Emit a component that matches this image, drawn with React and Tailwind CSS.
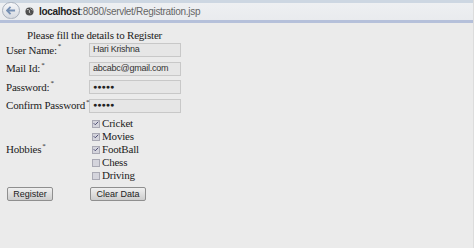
import { Check } from 'lucide-react';

const fields = [
  { label: 'User Name:', value: 'Hari Krishna' },
  { label: 'Mail Id:', value: 'abcabc@gmail.com' },
  { label: 'Password:', value: '●●●●●', dots: true },
  { label: 'Confirm Password', value: '●●●●●', dots: true },
];

const hobbies = [
  { name: 'Cricket', checked: true },
  { name: 'Movies', checked: true },
  { name: 'FootBall', checked: true },
  { name: 'Chess', checked: false },
  { name: 'Driving', checked: false },
];

function Box({ checked }) {
  return (
    <span className="w-[8px] h-[8px] border border-[#a9a9b4] bg-[#d4d4dc] flex items-center justify-center">
      {checked && <Check size={7} strokeWidth={3.5} className="text-[#3e3e66]" />}
    </span>
  );
}

function Star() {
  return <sup className="text-[7px] -top-[4px] relative ml-[1px]">*</sup>;
}

export default function App() {
  return (
    <div className="w-[474px] h-[248px] bg-[#ebebeb] overflow-hidden flex flex-col font-['Liberation_Serif',serif] text-[11px] tracking-[-0.2px] text-[#222] border-r border-[#dcdcdc]">
      {/* address bar */}
      <div className="h-[23px] bg-[#c9d3df] flex flex-col border-b-[3px] border-[#b5c0da]">
        <div className="h-[3px] bg-[#cdd7e2]" />
        <div className="flex-1 bg-gradient-to-b from-[#eef0f2] to-[#e9ebee] flex items-center pl-[2px] gap-[5px] tracking-normal">
          <span className="w-[18px] h-[17px] -mt-[2px] rounded-full border border-[#a8b0bc] bg-gradient-to-b from-[#f6f7f9] to-[#d6dae1] flex items-center justify-center">
            <svg width="10" height="9" viewBox="0 0 11 10">
              <path d="M5 1 L1 5 L5 9 M1 5 H10" stroke="#7690b4" strokeWidth="2" fill="none" />
            </svg>
          </span>
          <svg width="9" height="9" viewBox="0 0 10 10">
            <circle cx="5" cy="5" r="4.5" fill="#4f4f4f" />
            <path d="M2 3 Q4 2 5 4 Q4 6 6 7 M6 1.5 Q7 3 8.5 3.5" stroke="#d8d8d8" strokeWidth="1" fill="none" />
          </svg>
          <span className="font-['Liberation_Sans',sans-serif] text-[10px] tracking-[-0.3px] leading-none">
            <span className="font-bold text-[#222]">localhost</span>
            <span className="text-[#666]">:8080/servlet/Registration.jsp</span>
          </span>
        </div>
      </div>

      <div className="pl-[6px] pt-[5px]">
        <div className="pl-[21px] leading-[15px] h-[15px]">Please fill the details to Register</div>
        <div className="grid grid-cols-[83px_auto] w-fit gap-y-[4.5px]">
          {fields.map((f) => (
            <div key={f.label} className="contents">
              <div className="flex items-center h-[14px] whitespace-nowrap">
                {f.label}
                <Star />
              </div>
              <div className="h-[14px] w-[92px] border border-[#c8c8c8] bg-[#e6e6e6] flex items-center px-[3px] font-['Liberation_Sans',sans-serif] text-[9px] tracking-[-0.25px] text-[#333]">
                {f.dots ? <span className="text-[7px] tracking-[0px] text-[#222]">{f.value}</span> : f.value}
              </div>
            </div>
          ))}
          <div className="flex items-center whitespace-nowrap">
            Hobbies
            <Star />
          </div>
          <div className="pl-[3px] flex flex-col">
            {hobbies.map((h) => (
              <label key={h.name} className="flex items-center gap-[2px] h-[13px]">
                <Box checked={h.checked} />
                {h.name}
              </label>
            ))}
          </div>
          <div className="-mt-[2px] pl-[1px]">
            <button className="h-[14px] w-[46px] border border-[#8f8f8f] rounded-[2px] bg-gradient-to-b from-[#f0f0f0] to-[#cdcdcd] font-['Liberation_Sans',sans-serif] text-[9px] tracking-normal text-[#222] leading-none">
              Register
            </button>
          </div>
          <div className="-mt-[2px] pl-[1px]">
            <button className="h-[14px] w-[56px] border border-[#8f8f8f] rounded-[2px] bg-gradient-to-b from-[#f0f0f0] to-[#cdcdcd] font-['Liberation_Sans',sans-serif] text-[9px] tracking-normal text-[#222] leading-none">
              Clear Data
            </button>
          </div>
        </div>
      </div>
    </div>
  );
}
